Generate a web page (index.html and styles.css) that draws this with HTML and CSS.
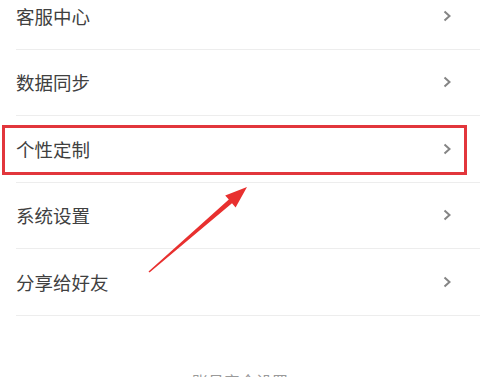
FILE: index.html
```html
<!DOCTYPE html>
<html lang="zh-CN">
<head>
    <meta charset="UTF-8">
    <meta name="viewport" content="width=device-width, initial-scale=1.0">
    <title>设置</title>
    <link rel="stylesheet" href="styles.css">
</head>
<body>
    <div class="menu">
        <div class="item">
            <span class="label">客服中心</span>
            <svg class="chevron" viewBox="0 0 8 12"><path d="M1.5 1.5 L6.5 6 L1.5 10.5"/></svg>
        </div>
        <div class="item">
            <span class="label">数据同步</span>
            <svg class="chevron" viewBox="0 0 8 12"><path d="M1.5 1.5 L6.5 6 L1.5 10.5"/></svg>
        </div>
        <div class="item active">
            <span class="label">个性定制</span>
            <svg class="chevron" viewBox="0 0 8 12"><path d="M1.5 1.5 L6.5 6 L1.5 10.5"/></svg>
        </div>
        <div class="item">
            <span class="label">系统设置</span>
            <svg class="chevron" viewBox="0 0 8 12"><path d="M1.5 1.5 L6.5 6 L1.5 10.5"/></svg>
        </div>
        <div class="item">
            <span class="label">分享给好友</span>
            <svg class="chevron" viewBox="0 0 8 12"><path d="M1.5 1.5 L6.5 6 L1.5 10.5"/></svg>
        </div>
    </div>
    <div class="footer">账号安全设置</div>

    <!-- annotation arrow -->
    <svg class="arrow" viewBox="0 0 120 100">
        <polygon points="107,7 95.6,27.4 92,23.3 9.5,92.5 8.5,91.5 88.8,19.5 85.2,15.4"/>
    </svg>
</body>
</html>
```

FILE: styles.css
```css
body{
    margin:0;
    background:#fff;
    font-family:"Noto Sans CJK SC", "Noto Sans", sans-serif;
    color:#404040;
    overflow:hidden;
}
.menu{
    margin-top:-17px;
}
.item{
    display:flex;
    align-items:center;
    justify-content:space-between;
    height:65.5px;
    margin-left:16px;
    padding-right:29px;
    border-bottom:1px solid #ededed;
}
.label{
    font-size:18.5px;
    line-height:24px;
}
.chevron{
    width:8px;
    height:12px;
}
.chevron path{
    fill:none;
    stroke:#858585;
    stroke-width:2;
}
.active{
    position:relative;
}
.active::after{
    content:"";
    position:absolute;
    top:9px;
    bottom:7px;
    left:-14px;
    right:13px;
    border:3px solid #e2363c;
}
.footer{
    margin-top:53px;
    text-align:center;
    font-size:16px;
    line-height:24px;
    color:#9a9a9a;
}
.arrow{
    position:absolute;
    left:140px;
    top:180px;
    width:120px;
    height:100px;
}
.arrow polygon{
    fill:#e8302f;
}
```
